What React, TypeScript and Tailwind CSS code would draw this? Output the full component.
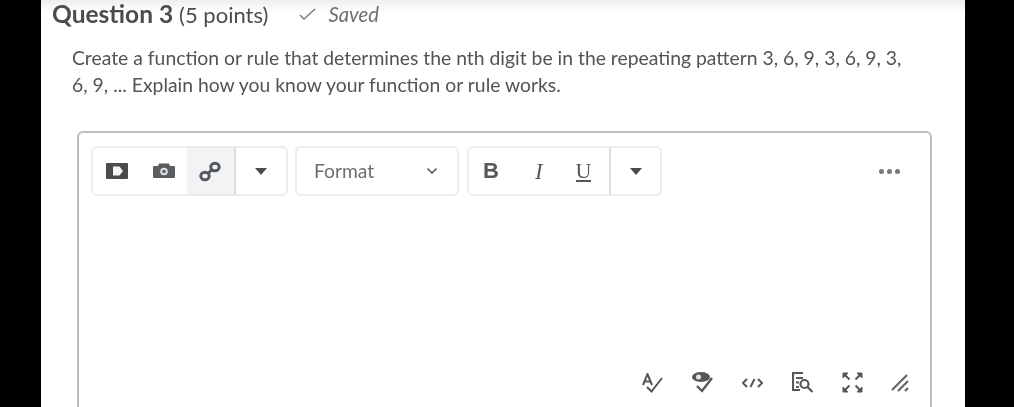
import { ChevronDown } from 'lucide-react';

function Caret() {
  return (
    <svg width="12" height="7" viewBox="0 0 12 7">
      <path d="M0 0h12L6 7z" fill="#494c4e" />
    </svg>
  );
}

function VideoIcon() {
  return (
    <svg width="22" height="16" viewBox="0 0 22 16">
      <rect width="22" height="16" rx="1" fill="#494c4e" />
      <path d="M7 3.500h6.500L17 8l-3.500 4.500H7z" fill="#f4f4f4" />
    </svg>
  );
}

function CameraIcon() {
  return (
    <svg width="22" height="16" viewBox="0 0 22 16">
      <path d="M1 3h4l1-2.500h10L17 3h4a1 1 0 0 1 1 1v10a1 1 0 0 1-1 1H1a1 1 0 0 1-1-1V4a1 1 0 0 1 1-1z" fill="#5b5e60" />
      <circle cx="11" cy="8.500" r="3.800" fill="#dedede" />
      <circle cx="11" cy="8.500" r="1.700" fill="#5b5e60" />
    </svg>
  );
}

function LinkIcon() {
  return (
    <svg width="22" height="21" viewBox="0 0 22 21" fill="none" stroke="#55585a" strokeWidth="3">
      <ellipse cx="6" cy="15" rx="4.200" ry="3.800" />
      <ellipse cx="16" cy="6" rx="4.200" ry="3.800" />
      <path d="M9 12.500l4-4" />
    </svg>
  );
}

function SpellIcon() {
  return (
    <svg width="21" height="20" viewBox="0 0 21 20" fill="none" stroke="#55585a" strokeWidth="2">
      <path d="M1 12L5.500 1 10 12M2.500 8.500h6" />
      <path d="M5 14l4.500 4.500L20 5" />
    </svg>
  );
}

function AccessIcon() {
  return (
    <svg width="21" height="21" viewBox="0 0 21 21" fill="none">
      <ellipse cx="9" cy="5" rx="9" ry="5" fill="#55585a" />
      <circle cx="6.500" cy="5" r="2.500" fill="#e6e6e6" />
      <path d="M5 14l5 5L20 6" stroke="#55585a" strokeWidth="2.400" />
    </svg>
  );
}

function CodeIcon() {
  return (
    <svg width="21" height="10" viewBox="0 0 21 10" fill="none" stroke="#55585a" strokeWidth="2">
      <path d="M5 1L1 5l4 4M16 1l4 4-4 4M12.500 1L8.500 9" />
    </svg>
  );
}

function EquationIcon() {
  return (
    <svg width="21" height="21" viewBox="0 0 21 21" fill="none" stroke="#55585a" strokeWidth="2.200">
      <path d="M11 1H1v17h7M4 6h7M4 10.500h3M4 15h3" />
      <circle cx="12.500" cy="12" r="4" />
      <path d="M15.500 15l5 5" />
    </svg>
  );
}

function FullscreenIcon() {
  return (
    <svg width="21" height="21" viewBox="0 0 21 21" fill="#55585a" stroke="#55585a">
      <path d="M1 1h5L1 6zM20 1v5l-5-5zM1 20v-5l5 5zM20 20h-5l5-5z" />
      <path d="M3 3l4.500 4.500M18 3l-4.500 4.500M3 18l4.500-4.500M18 18l-4.500-4.500" fill="none" strokeWidth="2" />
    </svg>
  );
}

function ResizeIcon() {
  return (
    <svg width="18" height="18" viewBox="0 0 18 18" fill="none" stroke="#666" strokeWidth="2.200">
      <path d="M1 16L16 1M7 17L17 7M14 17l3-3" />
    </svg>
  );
}

export default function App() {
  return (
    <div className="h-[407px] w-[1014px] overflow-hidden bg-black font-['Lato','Open_Sans',sans-serif] text-[#494c4e]">
      <div className="ml-[41px] h-[407px] w-[924px] bg-gradient-to-b from-[#eeeeee] to-white to-[12px] pl-[11px] blur-[0.7px]">
        <div className="flex h-[28px] items-center">
          <h2 className="text-[24.500px] leading-none font-bold text-[#4a4c4e]">
            Question 3 <span className="text-[22px] font-normal">(5 points)</span>
          </h2>
          <svg className="ml-[31px]" width="17" height="12" viewBox="0 0 17 12" fill="none" stroke="#808080" strokeWidth="1.500">
            <path d="M1 7l4 4L16 1" />
          </svg>
          <span className="ml-[12px] text-[20.300px] leading-none text-[#6e6e6e] italic">Saved</span>
        </div>

        <p className="mt-[16px] ml-[20px] w-[860px] text-[19.350px] leading-[27px] text-[#505456]">
          Create a function or rule that determines the nth digit be in the repeating pattern 3, 6, 9, 3, 6, 9, 3,
          <br />
          6, 9, ... Explain how you know your function or rule works.
        </p>

        <div className="mt-[33px] ml-[25px] h-[300px] w-[855px] rounded-t-md border-2 border-b-0 border-[#bdbdbd] pt-[13px] pl-[12px]">
          <div className="flex items-start">
            <div className="flex h-[50px] w-[197px] overflow-hidden rounded-md border-2 border-[#ececec]">
              <div className="flex w-[47px] items-center justify-center"><VideoIcon /></div>
              <div className="flex w-[47px] items-center justify-center"><CameraIcon /></div>
              <div className="flex w-[47px] items-center justify-center bg-[#f1f3f5] pr-[2px]"><LinkIcon /></div>
              <div className="flex flex-1 items-center justify-center border-l-2 border-[#dcdcdc]"><Caret /></div>
            </div>

            <div className="ml-[7px] flex h-[50px] w-[164px] items-center justify-between rounded-md border-2 border-[#ececec] pr-[17px] pl-[17px]">
              <span className="text-[19.300px] text-[#6b6e70]">Format</span>
              <ChevronDown size={16} strokeWidth={2.500} color="#55585a" />
            </div>

            <div className="ml-[8px] flex h-[50px] w-[195px] rounded-md border-2 border-[#ececec]">
              <div className="flex w-[140px] items-center pl-[14px] text-[#55585a]">
                <span className="font-['Liberation_Sans',sans-serif] text-[22px] leading-none font-bold">B</span>
                <span className="ml-[36px] font-['Liberation_Serif',serif] text-[23px] leading-none italic">I</span>
                <span className="ml-[33px] border-b-2 border-[#55585a] font-['Liberation_Serif',serif] text-[22px] leading-[19px]">U</span>
              </div>
              <div className="flex flex-1 items-center justify-center border-l-2 border-[#dcdcdc]"><Caret /></div>
            </div>

            <div className="ml-[217px] flex h-[50px] items-center gap-[3px]">
              <span className="size-[5px] rounded-full bg-[#777]" />
              <span className="size-[5px] rounded-full bg-[#777]" />
              <span className="size-[5px] rounded-full bg-[#777]" />
            </div>
          </div>

          <div className="mt-[176px] flex items-center pl-[551px]">
            <div className="w-[50px]"><SpellIcon /></div>
            <div className="w-[50px]"><AccessIcon /></div>
            <div className="w-[50px]"><CodeIcon /></div>
            <div className="w-[50px]"><EquationIcon /></div>
            <div className="w-[49px]"><FullscreenIcon /></div>
            <ResizeIcon />
          </div>
        </div>
      </div>
    </div>
  );
}
